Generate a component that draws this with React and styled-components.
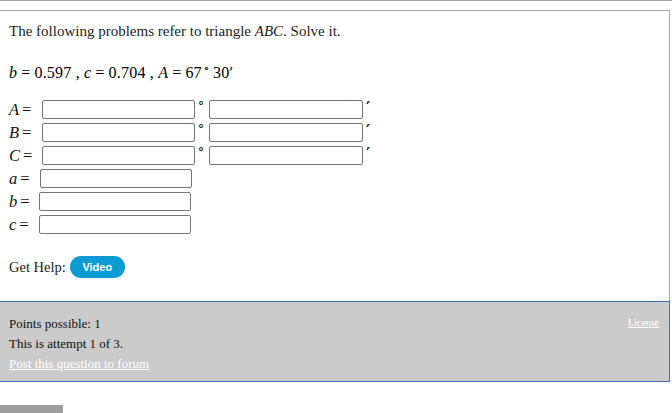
import React from 'react'
import styled, { createGlobalStyle } from 'styled-components'

const Global = createGlobalStyle`
    html, body {
        margin: 0;
        padding: 0;
        background: #fff;
        font-family: "Liberation Serif", "Times New Roman", serif;
        color: #222;
        overflow: hidden;
    }
`;

const Page = styled.div`
    width: 672px;
    height: 413px;
    border-top: 1px solid #a6a6a6;
    padding-top: 9px;
    box-sizing: border-box;
`;

const QuestionBox = styled.div`
    width: 670px;
    box-sizing: border-box;
    border-top: 1px solid #a6a6a6;
    border-right: 1px solid #a6a6a6;
    padding: 10px 9px 0 9px;
    height: 291px;
    display: flex;
    flex-direction: column;
`;

const Intro = styled.p`
    margin: 0;
    font-size: 15px;
    line-height: 20px;
`;

const MathVar = styled.i`
    font-style: italic;
`;

const Eq = styled.span`
    margin: 0 ${p => p.$tight ? 3 : 4}px;
`;

const Given = styled.p`
    margin: 17px 0 0 0;
    font-size: 16px;
    line-height: 20px;
    color: #000;
    letter-spacing: 0.2px;
`;

const Deg = styled.span`
    font-size: 11px;
    vertical-align: 6px;
    margin: 0 3px 0 1px;
`;

const Fields = styled.div`
    margin-top: 17px;
    display: flex;
    flex-direction: column;
    gap: 4px;
`;

const Row = styled.div`
    display: flex;
    align-items: center;
    height: 19px;
`;

const Label = styled.span`
    font-size: 16.5px;
    color: #111;
    width: ${p => p.$w}px;
    white-space: nowrap;
`;

const Box = styled.input`
    width: ${p => p.$w || 152}px;
    height: 19px;
    box-sizing: border-box;
    border: 1px solid #777;
    border-radius: 2px;
    padding: 0 3px;
    margin: 0;
    background: #fff;
    outline: none;
`;

const Unit = styled.span`
    align-self: flex-start;
    font-family: "DejaVu Sans", sans-serif;
    font-size: ${p => p.$prime ? 16 : 12}px;
    font-weight: bold;
    line-height: 12px;
    width: 14px;
    padding-left: 3px;
    margin-top: ${p => p.$prime ? 2 : 0}px;
    box-sizing: border-box;
    color: #222;
`;

const Help = styled.div`
    margin-top: 22px;
    display: flex;
    align-items: center;
    gap: 4px;
    font-size: 14.5px;
`;

const VideoButton = styled.button`
    background: #0d9bd3;
    color: #fff;
    border: none;
    border-radius: 11px;
    height: 22px;
    width: 55px;
    font-family: "Liberation Sans", Arial, sans-serif;
    font-weight: bold;
    font-size: 11px;
    padding: 0;
    cursor: pointer;
`;

const Footer = styled.div`
    width: 670px;
    height: 81px;
    box-sizing: border-box;
    background: #cbcbcb;
    border-top: 1px solid #3d6fbd;
    border-bottom: 1px solid #3d6fbd;
    border-right: 1px solid #3d6fbd;
    padding: 12px 9px 0 9px;
    font-size: 13px;
    color: #111;
    display: grid;
    grid-template-columns: 1fr auto;
    align-content: start;
`;

const FootLine = styled.div`
    grid-column: 1;
    line-height: 20px;
`;

const FootLink = styled.a`
    color: #fff;
    text-decoration: underline;
    font-size: ${p => p.$small ? '10px' : '13px'};
    line-height: ${p => p.$small ? '16px' : '20px'};
`;

const LicenseCell = styled.div`
    grid-column: 2;
    grid-row: 1;
    padding-right: 1px;
`;

const Tab = styled.div`
    margin-top: 23px;
    width: 63px;
    height: 10px;
    background: #9e9e9e;
`;

const angleRows = ['A', 'B', 'C'];
const sideRows = [
    { name: 'a', w: 31 },
    { name: 'b', w: 30 },
    { name: 'c', w: 30 },
];

const App = () => {
    return (
        <>
            <Global />
            <Page>
                <QuestionBox>
                    <Intro>
                        The following problems refer to triangle <MathVar>ABC</MathVar>. Solve it.
                    </Intro>
                    <Given>
                        <MathVar>b</MathVar><Eq>=</Eq>0.597 , <MathVar>c</MathVar><Eq>=</Eq>0.704 , <MathVar>A</MathVar><Eq>=</Eq>67<Deg>∘</Deg>30′
                    </Given>
                    <Fields>
                        {angleRows.map(n => (
                            <Row key={n}>
                                <Label $w={33}><MathVar>{n}</MathVar><Eq $tight>=</Eq></Label>
                                <Box $w={153} />
                                <Unit>°</Unit>
                                <Box $w={154} />
                                <Unit $prime>′</Unit>
                            </Row>
                        ))}
                        {sideRows.map(r => (
                            <Row key={r.name}>
                                <Label $w={r.w}><MathVar>{r.name}</MathVar><Eq $tight>=</Eq></Label>
                                <Box $w={152} />
                            </Row>
                        ))}
                    </Fields>
                    <Help>
                        <span>Get Help:</span>
                        <VideoButton>Video</VideoButton>
                    </Help>
                </QuestionBox>
                <Footer>
                    <FootLine>Points possible: 1</FootLine>
                    <LicenseCell><FootLink $small href="#">License</FootLink></LicenseCell>
                    <FootLine>This is attempt 1 of 3.</FootLine>
                    <FootLine><FootLink href="#">Post this question to forum</FootLink></FootLine>
                </Footer>
                <Tab />
            </Page>
        </>
    )
}

export default App
